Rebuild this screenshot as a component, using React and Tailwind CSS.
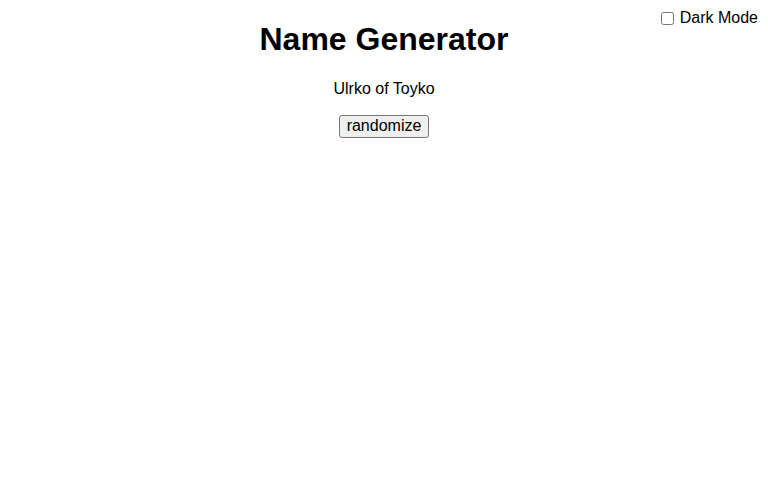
import { useState } from 'react';

const firstNames = ['Ulrko', 'Brinna', 'Tavos', 'Mirela', 'Gorim', 'Elsa', 'Kadrik'];
const places = ['Toyko', 'Ashvale', 'Dunmere', 'Korran', 'Veldt', 'Myrr'];

function pick(list) {
  return list[Math.floor(Math.random() * list.length)];
}

export default function App() {
  const [name, setName] = useState('Ulrko of Toyko');
  const [dark, setDark] = useState(false);

  const randomize = () => setName(`${pick(firstNames)} of ${pick(places)}`);

  return (
    <div
      className={`relative min-h-[480px] text-center font-['Liberation_Sans',Arial,sans-serif] text-base ${
        dark ? 'bg-[#121212] text-white' : 'bg-white text-black'
      }`}
    >
      <label className="absolute right-[10px] top-[9px] flex items-center leading-[18.4px]">
        <input
          type="checkbox"
          checked={dark}
          onChange={(e) => setDark(e.target.checked)}
          className="ml-1 mr-[6px] h-[13px] w-[13px]"
        />
        <span>Dark Mode</span>
      </label>

      <div className="pt-[21.44px]">
        <h1 className="text-[32px] font-bold leading-[37px]">Name Generator</h1>
        <p className="mt-[21.44px] leading-[18.4px]">{name}</p>
        <div className="mt-4">
          <button
            type="button"
            onClick={randomize}
            className="rounded-[3px] border border-[#767676] bg-[#efefef] px-[7px] py-[1.5px] leading-[18.4px] text-black hover:bg-[#e5e5e5]"
          >
            randomize
          </button>
        </div>
      </div>
    </div>
  );
}
